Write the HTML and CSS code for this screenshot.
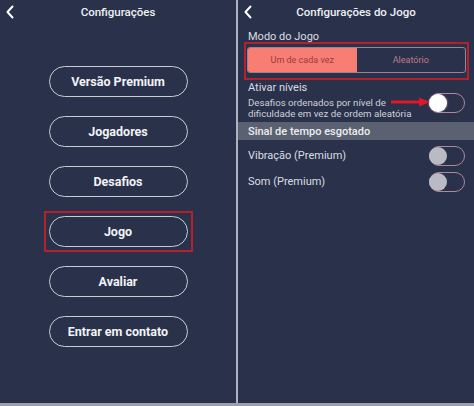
FILE: index.html
```html
<!DOCTYPE html>
<html lang="pt">
<head>
  <meta charset="UTF-8" />
  <meta name="viewport" content="width=device-width, initial-scale=1.0"/>
  <title>Configurações</title>
  <link rel="stylesheet" href="styles.css">
</head>
<body>
  <div class="screens">
    <!-- Configurações -->
    <section class="panel">
      <header class="topbar">
        <svg class="back" viewBox="0 0 10 14" width="10" height="14"><path d="M7.5 1.5 L2.5 7 L7.5 12.5" /></svg>
        <h1>Configurações</h1>
      </header>
      <nav class="menu">
        <button class="menu-btn">Versão Premium</button>
        <button class="menu-btn">Jogadores</button>
        <button class="menu-btn">Desafios</button>
        <div class="mark mark-menu"><button class="menu-btn">Jogo</button></div>
        <button class="menu-btn">Avaliar</button>
        <button class="menu-btn">Entrar em contato</button>
      </nav>
    </section>

    <div class="divider"></div>

    <!-- Configurações do Jogo -->
    <section class="panel game">
      <header class="topbar">
        <svg class="back" viewBox="0 0 10 14" width="10" height="14"><path d="M7.5 1.5 L2.5 7 L7.5 12.5" /></svg>
        <h1>Configurações do Jogo</h1>
      </header>

      <div class="block">
        <p class="label">Modo do Jogo</p>
        <div class="mark mark-mode">
          <div class="segmented">
            <span class="seg active">Um de cada vez</span>
            <span class="seg">Aleatório</span>
          </div>
        </div>
      </div>

      <div class="block">
        <p class="label levels">Ativar níveis</p>
        <div class="levels-row">
          <p class="desc">Desafios ordenados por nível de<br>dificuldade em vez de ordem aleatória</p>
          <svg class="arrow" viewBox="0 0 40 10" width="40" height="10"><path d="M0 5 H30" /><polygon points="28,0.5 39,5 28,9.5" /></svg>
          <span class="toggle on"><span class="knob"></span></span>
        </div>
      </div>

      <div class="section-bar">Sinal de tempo esgotado</div>

      <div class="block">
        <div class="row">
          <span class="label">Vibração (Premium)</span>
          <span class="toggle"><span class="knob"></span></span>
        </div>
        <div class="row">
          <span class="label">Som (Premium)</span>
          <span class="toggle"><span class="knob"></span></span>
        </div>
      </div>
    </section>
  </div>
  <div class="bottom-strip"></div>
</body>
</html>
```

FILE: styles.css
```css
* {
  box-sizing: border-box;
}

body {
  margin: 0;
  width: 474px;
  height: 406px;
  overflow: hidden;
  font-family: 'Roboto', 'Inter', sans-serif;
  background-color: #29324a;
  color: #e6e7ec;
}

p {
  margin: 0;
}

.screens {
  display: flex;
  height: 403px;
}

.panel {
  width: 236px;
  display: flex;
  flex-direction: column;
}

.game {
  flex: 1;
}

.divider {
  width: 2px;
  background-color: #aeb3bd;
}

.bottom-strip {
  height: 3px;
  background-color: #9ba0aa;
}

/* top bar */
.topbar {
  display: grid;
  grid-template-columns: 24px 1fr 24px;
  align-items: center;
  height: 24px;
}

.topbar h1 {
  grid-column: 2;
  margin: 0;
  text-align: center;
  font-size: 11.5px;
  font-weight: 500;
  color: #eef0f4;
}

.back {
  grid-column: 1;
  grid-row: 1;
  margin-left: 5px;
  fill: none;
  stroke: #ffffff;
  stroke-width: 2;
  stroke-linecap: round;
  stroke-linejoin: round;
}

/* menu */
.menu {
  display: flex;
  flex-direction: column;
  align-items: center;
  gap: 19px;
  margin-top: 42px;
}

.menu-btn {
  display: block;
  width: 139px;
  height: 31px;
  border: 1px solid #c9ccd4;
  border-radius: 16px;
  background: transparent;
  color: #f2f3f6;
  font-family: inherit;
  font-size: 12.5px;
  font-weight: 700;
  cursor: pointer;
}

.mark {
  border: 2px solid #b3212f;
}

.mark-menu {
  margin: -5px 0;
  padding: 3px;
}

/* game settings */
.block {
  padding: 0 9px 0 10px;
}

.label {
  font-size: 11px;
  line-height: 12px;
  color: #dcdde3;
}

.block > .label:first-child {
  margin-top: 7px;
}

.mark-mode {
  margin: -1px -4px 0 -4px;
  padding: 3px 1px 5px 1px;
}

.segmented {
  display: flex;
  height: 26px;
  border: 1px solid #a0828f;
  border-radius: 3px;
  overflow: hidden;
}

.seg {
  flex: 1;
  display: flex;
  align-items: center;
  justify-content: center;
  font-size: 9px;
  color: #c27a8a;
}

.seg.active {
  background-color: #f87e73;
  color: #9c3b3f;
}

.block > .label.levels {
  margin-top: 2px;
}

.levels-row {
  position: relative;
  display: flex;
  justify-content: space-between;
  align-items: flex-start;
  margin-top: 3px;
}

.desc {
  font-size: 9.7px;
  line-height: 11px;
  color: #cfd1d8;
}

.arrow {
  position: absolute;
  left: 143px;
  top: -0.5px;
}

.arrow path {
  stroke: #e0162b;
  stroke-width: 3;
}

.arrow polygon {
  fill: #e0162b;
}

.levels-row .toggle {
  margin-top: -4px;
}

.toggle {
  display: flex;
  align-items: center;
  width: 36px;
  height: 20px;
  border: 1.5px solid #b38897;
  border-radius: 10px;
  background-color: #29324a;
  flex-shrink: 0;
}

.knob {
  width: 18px;
  height: 18px;
  margin-left: -1px;
  border-radius: 50%;
  background-color: #b9bac3;
}

.toggle.on .knob {
  background-color: #ffffff;
  box-shadow: 0 0 2px #f2b6c0;
}

.section-bar {
  margin-top: 3px;
  height: 18px;
  padding: 0 10px;
  display: flex;
  align-items: center;
  background-color: #5b6170;
  font-size: 11px;
  font-weight: 500;
  color: #eceef2;
}

.row {
  display: flex;
  justify-content: space-between;
  align-items: center;
  height: 26px;
}

.row:first-child {
  margin-top: 3px;
}

.row .label {
  font-size: 11px;
}
```
